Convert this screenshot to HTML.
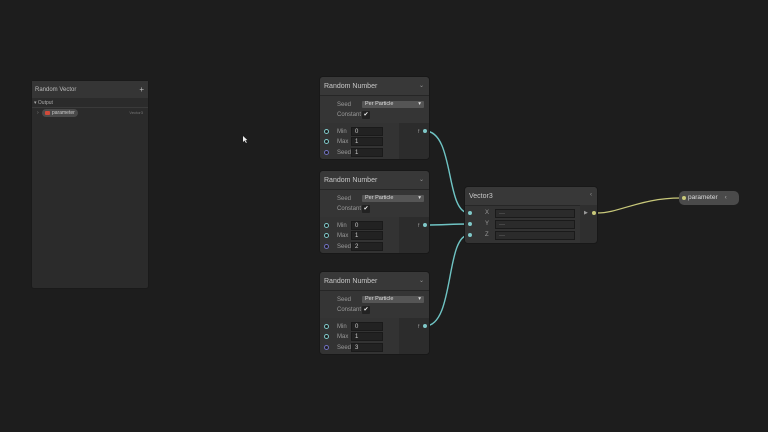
<!DOCTYPE html><html><head><style>
*{margin:0;padding:0;box-sizing:border-box}
body{width:768px;height:432px;background:#1d1d1d;overflow:hidden;position:relative;font-family:"Liberation Sans",sans-serif;color:#c4c4c4}
.a{position:absolute}
.node{position:absolute;background:#2f2f2f;border:1px solid #181818;border-radius:4px;width:111px;height:84px;overflow:hidden}
.hd{position:absolute;left:0;top:0;right:0;height:18px;background:#383838;font-size:7px;padding:6px 0 0 4px;color:#c8c8c8}
.hd i{position:absolute;right:5px;top:5px;font-style:normal;font-size:6px;color:#999}
.set{position:absolute;left:0;top:18px;right:0;height:28px;background:#353535;border-top:1px solid #262626}
.prt{position:absolute;left:0;top:46px;width:79px;bottom:0;background:#333}
.rt{position:absolute;left:79px;top:46px;right:0;bottom:0;background:#2c2c2c}
.l{position:absolute;font-size:6px;color:#9a9a9a}
.f{position:absolute;background:#222;border:1px solid #1a1a1a;height:9px;font-size:6px;color:#ccc;padding:1px 0 0 3px;width:32px}
.dot{position:absolute;width:5px;height:5px;border-radius:50%;border:1px solid #7fc8c8;background:#1d1d1d}
.dd{position:absolute;left:42px;top:5px;width:62px;height:7px;background:#555;border-radius:1px;font-size:5.5px;color:#ddd;padding-left:3px;line-height:7px}
.ck{position:absolute;left:42px;top:15px;width:8px;height:8px;background:#222;border-radius:1px;font-size:6px;line-height:8px;text-align:center;color:#eee}
</style></head><body>
<svg class="a" style="left:0;top:0" width="768" height="432">
<path d="M425 131 C455 131 445 213 469 213" stroke="#6fc4c4" stroke-width="1.4" fill="none"/>
<path d="M425 225 C445 225 450 224 469 224" stroke="#6fc4c4" stroke-width="1.4" fill="none"/>
<path d="M425 326 C455 326 445 235 469 235" stroke="#6fc4c4" stroke-width="1.4" fill="none"/>
<path d="M597 213 C620 213 640 198 681 198" stroke="#c8c87a" stroke-width="1.2" fill="none"/>
<path d="M243 136 l0 6 l1.5 -1.5 l1.5 2.5 l0.8 -0.5 l-1.4 -2.4 l2 0 z" fill="#eee"/>
</svg>
<div class="a" style="left:31px;top:80px;width:118px;height:209px;background:#2b2b2b;border:1px solid #1a1a1a;border-radius:3px">
<div class="a" style="left:0;top:0;right:0;height:17px;background:#353535;font-size:6px;padding:6px 0 0 3px;color:#bbb">Random Vector<span class="a" style="right:4px;top:4px;font-size:8px">+</span></div>
<div class="a" style="left:2px;top:19px;font-size:5px;color:#aaa">▾ Output</div>
<div class="a" style="left:0;top:26px;right:0;height:1px;background:#3a3a3a"></div>
<div class="a" style="left:5px;top:29px;font-size:5px;color:#888">›</div>
<div class="a" style="left:10px;top:28px;width:36px;height:8px;border-radius:4px;background:#4a4a4a;font-size:5px;color:#ccc;padding-left:10px;line-height:8px;white-space:nowrap">parameter<span class="a" style="left:3px;top:2px;width:5px;height:4px;background:#d04a3a;border-radius:1px"></span></div>
<div class="a" style="right:5px;top:29px;font-size:4px;color:#777">Vector3</div>
</div>

<div class="node" style="left:319px;top:76px"><div class="hd">Random Number<i>⌄</i></div><div class="set"><div class="l" style="left:17px;top:6px">Seed</div><div class="dd">Per Particle<span style="float:right;margin-right:3px">▾</span></div><div class="l" style="left:17px;top:16px">Constant</div><div class="ck">✔</div></div><div class="prt"></div><div class="rt"></div>
<div class="dot" style="left:4px;top:52px"></div><div class="dot" style="left:4px;top:62px"></div><div class="dot" style="left:4px;top:73px;border-color:#7070c0"></div>
<div class="l" style="left:17px;top:52px">Min</div><div class="l" style="left:17px;top:62px">Max</div><div class="l" style="left:17px;top:73px">Seed</div>
<div class="f" style="left:31px;top:50px">0</div><div class="f" style="left:31px;top:60px">1</div><div class="f" style="left:31px;top:71px">1</div>
<div class="l" style="left:98px;top:52px;font-size:5px">f</div><div class="dot" style="left:103px;top:52px;width:4px;height:4px;background:#7fc8c8"></div></div>

<div class="node" style="left:319px;top:170px"><div class="hd">Random Number<i>⌄</i></div><div class="set"><div class="l" style="left:17px;top:6px">Seed</div><div class="dd">Per Particle<span style="float:right;margin-right:3px">▾</span></div><div class="l" style="left:17px;top:16px">Constant</div><div class="ck">✔</div></div><div class="prt"></div><div class="rt"></div>
<div class="dot" style="left:4px;top:52px"></div><div class="dot" style="left:4px;top:62px"></div><div class="dot" style="left:4px;top:73px;border-color:#7070c0"></div>
<div class="l" style="left:17px;top:52px">Min</div><div class="l" style="left:17px;top:62px">Max</div><div class="l" style="left:17px;top:73px">Seed</div>
<div class="f" style="left:31px;top:50px">0</div><div class="f" style="left:31px;top:60px">1</div><div class="f" style="left:31px;top:71px">2</div>
<div class="l" style="left:98px;top:52px;font-size:5px">f</div><div class="dot" style="left:103px;top:52px;width:4px;height:4px;background:#7fc8c8"></div></div>

<div class="node" style="left:319px;top:271px"><div class="hd">Random Number<i>⌄</i></div><div class="set"><div class="l" style="left:17px;top:6px">Seed</div><div class="dd">Per Particle<span style="float:right;margin-right:3px">▾</span></div><div class="l" style="left:17px;top:16px">Constant</div><div class="ck">✔</div></div><div class="prt"></div><div class="rt"></div>
<div class="dot" style="left:4px;top:52px"></div><div class="dot" style="left:4px;top:62px"></div><div class="dot" style="left:4px;top:73px;border-color:#7070c0"></div>
<div class="l" style="left:17px;top:52px">Min</div><div class="l" style="left:17px;top:62px">Max</div><div class="l" style="left:17px;top:73px">Seed</div>
<div class="f" style="left:31px;top:50px">0</div><div class="f" style="left:31px;top:60px">1</div><div class="f" style="left:31px;top:71px">3</div>
<div class="l" style="left:98px;top:52px;font-size:5px">f</div><div class="dot" style="left:103px;top:52px;width:4px;height:4px;background:#7fc8c8"></div></div>

<div class="node" style="left:464px;top:186px;width:134px;height:58px"><div class="hd">Vector3<i>‹</i></div>
<div class="a" style="left:0;top:18px;width:115px;bottom:0;background:#333;border-top:1px solid #262626"></div>
<div class="dot" style="left:3px;top:24px;background:#7fc8c8;width:4px;height:4px"></div><div class="dot" style="left:3px;top:35px;background:#7fc8c8;width:4px;height:4px"></div><div class="dot" style="left:3px;top:46px;background:#7fc8c8;width:4px;height:4px"></div>
<div class="l" style="left:20px;top:23px">X</div><div class="l" style="left:20px;top:34px">Y</div><div class="l" style="left:20px;top:45px">Z</div>
<div class="f" style="left:30px;top:22px;width:80px;background:#2b2b2b;color:#666">—</div><div class="f" style="left:30px;top:33px;width:80px;background:#2b2b2b;color:#666">—</div><div class="f" style="left:30px;top:44px;width:80px;background:#2b2b2b;color:#666">—</div>
<div class="l" style="left:119px;top:23px;font-size:5px">▶</div><div class="dot" style="left:127px;top:24px;width:4px;height:4px;border-color:#c8c87a;background:#c8c87a"></div></div>

<div class="a" style="left:679px;top:191px;width:60px;height:14px;border-radius:5px;background:#4a4a4a;font-size:6.5px;color:#ddd;padding:3px 0 0 9px">parameter<span style="margin-left:7px;color:#aaa">‹</span><span class="a" style="left:3px;top:5px;width:4px;height:4px;border-radius:50%;background:#c8c87a"></span></div>
</body></html>
